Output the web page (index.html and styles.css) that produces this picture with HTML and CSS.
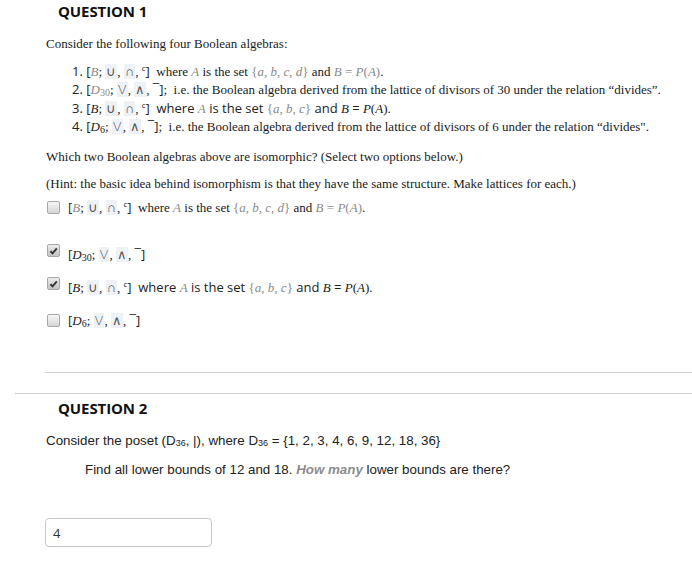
FILE: index.html
```html
<!DOCTYPE html>
<html>
<head>
<meta charset="utf-8">
<title>Questions</title>
<link rel="stylesheet" href="styles.css">
</head>
<body>
<section class="question q1">
  <h2 class="q-title">QUESTION 1</h2>
  <div class="q-body">
    <p class="intro">Consider the following four Boolean algebras:</p>
    <ol class="algebras">
      <li><span class="sans">1. [</span><i class="mv">B</i>; <span class="sym">∪</span>, <span class="sym">∩</span>, <sup class="sup">c</sup><span class="sans">]</span>&nbsp; where <i class="mv">A</i> is the set <span class="mv">{<i>a</i>, <i>b</i>, <i>c</i>, <i>d</i>}</span> and <span class="mv"><i>B</i> = <i>P</i>(<i>A</i>)</span>.</li>
      <li><span class="sans">2. [</span><i class="mv">D</i><sub class="sub mv">30</sub>; <span class="sym">V</span>, <span class="sym">∧</span>, <span class="sans">¯]</span>;&nbsp; i.e. the Boolean algebra derived from the lattice of divisors of 30 under the relation “divides”.</li>
      <li><span class="sans">3. [</span><i>B</i>; <span class="sym">∪</span>, <span class="sym">∩</span>, <sup class="sup">c</sup><span class="sans">]&nbsp; where <i class="mv ser">A</i> is the set </span><span class="mv">{<i>a</i>, <i>b</i>, <i>c</i>}</span><span class="sans"> and </span><i>B</i> <span class="sans">=</span> <i>P</i>(<i>A</i>).</li>
      <li><span class="sans">4. [</span><i>D</i><sub class="sub">6</sub>; <span class="sym">V</span>, <span class="sym">∧</span>, <span class="sans">¯]</span>;&nbsp; i.e. the Boolean algebra derived from the lattice of divisors of 6 under the relation “divides".</li>
    </ol>
    <p class="para">Which two Boolean algebras above are isomorphic? (Select two options below.)</p>
    <p class="para hint">(Hint: the basic idea behind isomorphism is that they have the same structure. Make lattices for each.)</p>
    <ul class="options">
      <li class="option opt-first">
        <span class="cb"></span>
        <span class="opt-text"><span class="sans">[</span><i class="mv">B</i>; <span class="sym">∪</span>, <span class="sym">∩</span>, <sup class="sup">c</sup><span class="sans">]</span>&nbsp; where <i class="mv">A</i> is the set <span class="mv">{<i>a</i>, <i>b</i>, <i>c</i>, <i>d</i>}</span> and <span class="mv"><i>B</i> = <i>P</i>(<i>A</i>)</span>.</span>
      </li>
      <li class="option">
        <span class="cb checked"><svg viewBox="0 0 12 12" width="12" height="12"><path d="M2.6 6.3 L5 8.6 L9.6 3.2" fill="none" stroke="#333" stroke-width="2.1"/></svg></span>
        <span class="opt-text"><span class="sans">[</span><i>D</i><sub class="sub">30</sub>; <span class="sym">V</span>, <span class="sym">∧</span>, <span class="sans">¯]</span></span>
      </li>
      <li class="option">
        <span class="cb checked"><svg viewBox="0 0 12 12" width="12" height="12"><path d="M2.6 6.3 L5 8.6 L9.6 3.2" fill="none" stroke="#333" stroke-width="2.1"/></svg></span>
        <span class="opt-text"><span class="sans">[</span><i>B</i>; <span class="sym">∪</span>, <span class="sym">∩</span>, <sup class="sup">c</sup><span class="sans">]&nbsp; where <i class="mv ser">A</i> is the set </span><span class="mv">{<i>a</i>, <i>b</i>, <i>c</i>}</span><span class="sans"> and </span><i>B</i> <span class="sans">=</span> <i>P</i>(<i>A</i>).</span>
      </li>
      <li class="option">
        <span class="cb"></span>
        <span class="opt-text"><span class="sans">[</span><i>D</i><sub class="sub">6</sub>; <span class="sym">V</span>, <span class="sym">∧</span>, <span class="sans">¯]</span></span>
      </li>
    </ul>
  </div>
</section>
<hr class="rule rule-inner">
<hr class="rule rule-outer">
<section class="question q2">
  <h2 class="q-title">QUESTION 2</h2>
  <div class="q-body arial">
    <p class="poset">Consider the poset (D<sub class="sub2">36</sub>, |), where D<sub class="sub2">36</sub> = {1, 2, 3, 4, 6, 9, 12, 18, 36}</p>
    <p class="task">Find all lower bounds of 12 and 18. <b class="emph">How many</b> lower bounds are there?</p>
    <div class="answer">4</div>
  </div>
</section>
</body>
</html>
```

FILE: styles.css
```css
html, body {
  margin: 0;
  padding: 0;
  background: #ffffff;
}
body {
  font-family: "Liberation Serif", "Times New Roman", serif;
  font-size: 13px;
  color: #1a1a1a;
  width: 692px;
}
.question {
  padding-left: 46px;
}
.q-title {
  margin: 1px 0 0 12px;
  font-family: "Open Sans", "DejaVu Sans", sans-serif;
  font-weight: 700;
  font-size: 15px;
  line-height: 20px;
  color: #111;
  letter-spacing: -0.1px;
}
.q-body {
  line-height: 18px;
}
.intro {
  margin: 14px 0 0 0;
}
.algebras {
  list-style: none;
  margin: 10px 0 0 0;
  padding: 0 0 0 26px;
}
.algebras li {
  height: 18.3px;
  white-space: nowrap;
}
.sans {
  font-family: "Open Sans", "DejaVu Sans", sans-serif;
  font-size: 13px;
  line-height: 1;
  color: #222;
}
.sym {
  font-family: "DejaVu Sans", "Open Sans", sans-serif;
  font-weight: 200;
  font-size: 13px;
  line-height: 1;
  background: #eef2f6;
  color: #555;
  padding: 0 1px;
}
.mv {
  color: #8a8a8a;
}
.ser {
  font-family: "Liberation Serif", "Times New Roman", serif;
}
.sup {
  font-size: 8px;
  line-height: 0;
  vertical-align: 5px;
  font-family: "Open Sans", sans-serif;
}
.sub {
  font-size: 10px;
  line-height: 0;
  vertical-align: -2px;
}
.para {
  margin: 12px 0 0 0;
}
.hint {
  margin-top: 9px;
}
.options {
  list-style: none;
  margin: 6px 0 0 0;
  padding: 0;
}
.option {
  display: flex;
  align-items: flex-start;
  gap: 8px;
  height: 18px;
  margin-bottom: 15px;
  white-space: nowrap;
}
.opt-first {
  margin-bottom: 29px;
}
.cb {
  flex: none;
  width: 11px;
  height: 11px;
  margin: 2px 0 0 1px;
  border: 1px solid #a8a8a8;
  border-radius: 2px;
  background: linear-gradient(#f6f6f6, #d6d6d6);
  display: flex;
  align-items: center;
  justify-content: center;
  overflow: visible;
}
.cb.checked {
  margin-top: -2px;
  background: linear-gradient(#ececec, #c4c4c4);
}
.cb svg {
  display: block;
}
.opt-text {
  display: block;
}
.rule {
  border: 0;
  height: 1px;
  background: #d0d0d0;
  margin: 0;
}
.rule-inner {
  margin: 42px 0 0 45px;
}
.rule-outer {
  margin: 20px 0 0 15px;
}
.q2 .q-title {
  margin-top: 4px;
}
.arial {
  font-family: "Liberation Sans", Arial, sans-serif;
  font-size: 13.33px;
  color: #222;
}
.poset {
  margin: 14px 0 0 0;
}
.sub2 {
  font-size: 9px;
  line-height: 0;
  vertical-align: -1px;
}
.task {
  margin: 11px 0 0 39px;
}
.emph {
  font-style: italic;
  color: #8c8c8c;
}
.answer {
  margin: 39px 0 0 -1px;
  width: 158px;
  height: 27px;
  padding-left: 7px;
  border: 1px solid #c6c6c6;
  border-radius: 4px;
  font-family: "Open Sans", sans-serif;
  font-size: 13px;
  line-height: 28px;
  color: #333;
}
```
